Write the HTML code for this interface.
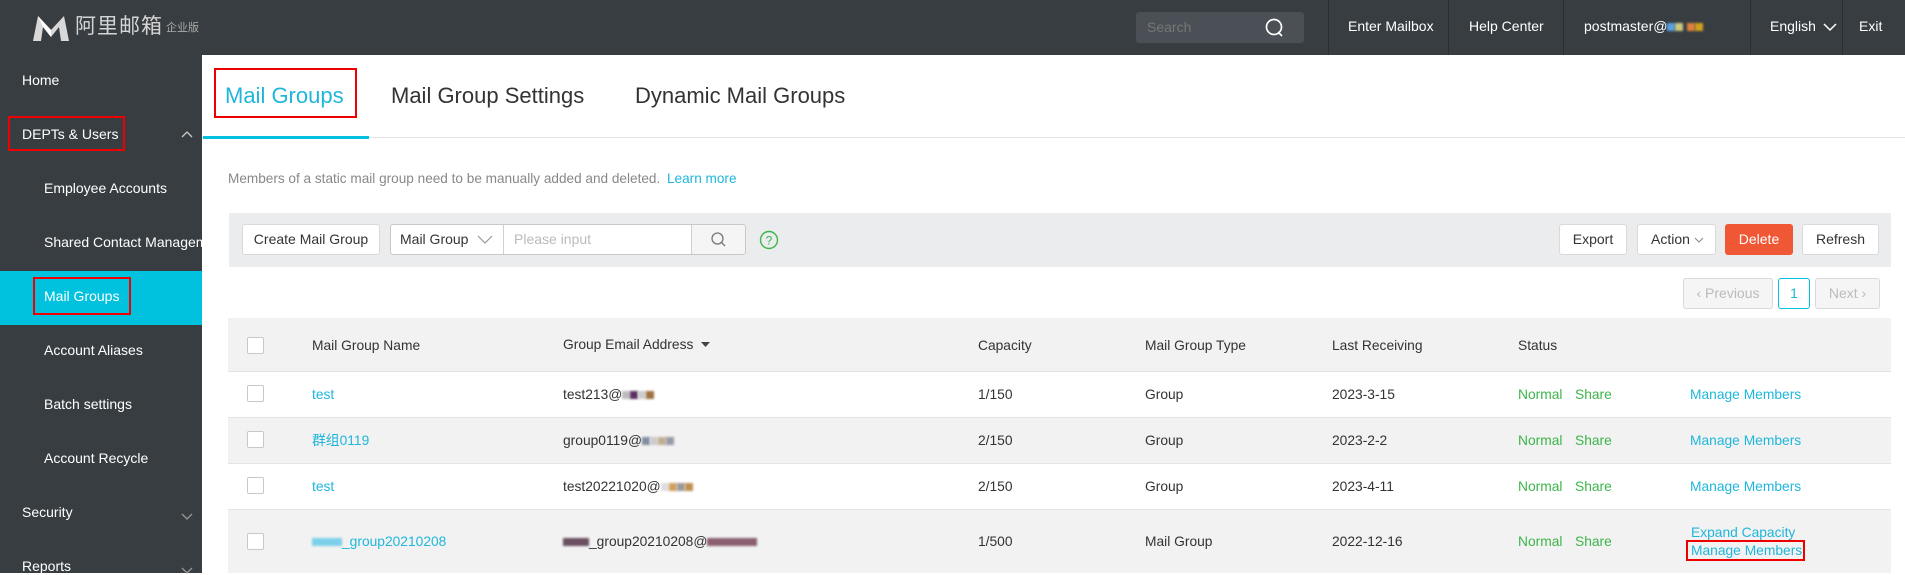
<!DOCTYPE html>
<html><head><meta charset="utf-8"><style>
*{margin:0;padding:0;box-sizing:border-box}
body{width:1905px;height:573px;overflow:hidden;background:#fff;font-family:"Liberation Sans","Noto Sans CJK SC",sans-serif;color:#333;position:relative}
.a{position:absolute;white-space:nowrap}
.hdr{left:0;top:0;width:1905px;height:55px;background:#373d41}
.side{left:0;top:55px;width:202px;height:518px;background:#373d41}
.nav{color:#fff;font-size:14px;line-height:17px}
.sep{top:0;width:1px;height:55px;background:#2a2f32}
.ht{color:#fff;font-size:14px;top:18px;line-height:17px}
.btn{background:#fff;border:1px solid #d9d9d9;border-radius:3px;height:31px;top:224px;font-size:14px;line-height:29px;text-align:center;color:#333}
.row{left:228px;width:1663px;border-bottom:1px solid #e3e3e3}
.cb{width:17px;height:17px;border:1px solid #c8c8c8;border-radius:2px;background:#fff;left:247px}
.t{font-size:13.8px;line-height:17px}
.lk{color:#1fb6db}
.gr{color:#3cb54a}
.blur{display:inline-block;width:8px;height:8px;vertical-align:middle;filter:blur(1px)}
</style></head><body>
<div class="a hdr"></div>
<svg class="a" style="left:31px;top:15px" width="40" height="27" viewBox="0 0 40 27"><path d="M2 26 L7 1 L20 15 L33 1 L38 26 L30 26 L28 12 L20 22 L12 12 L10 26Z" fill="#d9d9d9"/><path d="M7 1 L20 15 L20 22 L12 12Z" fill="#fff"/></svg>
<div class="a" style="left:75px;top:14px;color:#d5d5d5;font-size:21px;line-height:26px;letter-spacing:1px">阿里邮箱</div>
<div class="a" style="left:166px;top:21px;color:#aaa;font-size:11px;line-height:14px">企业版</div>
<div class="a" style="left:1136px;top:12px;width:168px;height:31px;background:#4a5055;border-radius:3px"></div>
<div class="a" style="left:1147px;top:19px;color:#777;font-size:14px;line-height:17px">Search</div>
<svg class="a" style="left:1264px;top:17px" width="22" height="22" viewBox="0 0 22 22"><circle cx="10" cy="10" r="7.5" fill="none" stroke="#fff" stroke-width="1.7"/><path d="M14 15 L18 19" stroke="#fff" stroke-width="1.7"/></svg>
<div class="a sep" style="left:1328px"></div>
<div class="a ht" style="left:1348px">Enter Mailbox</div>
<div class="a sep" style="left:1448px"></div>
<div class="a ht" style="left:1469px">Help Center</div>
<div class="a sep" style="left:1563px"></div>
<div class="a ht" style="left:1584px">postmaster@<span class="blur" style="background:#5aa0e0"></span><span class="blur" style="background:#c9c980"></span> <span class="blur" style="background:#e08040"></span><span class="blur" style="background:#d0a020"></span></div>
<div class="a sep" style="left:1750px"></div>
<div class="a ht" style="left:1770px">English</div>
<svg class="a" style="left:1823px;top:22px" width="14" height="10"><path d="M1 2 L7 8 L13 2" stroke="#fff" stroke-width="1.5" fill="none"/></svg>
<div class="a sep" style="left:1842px"></div>
<div class="a ht" style="left:1859px">Exit</div>

<div class="a side"></div>
<div class="a" style="left:0;top:271px;width:202px;height:54px;background:#00c1de"></div>
<div class="a nav" style="left:22px;top:72px">Home</div>
<div class="a nav" style="left:22px;top:126px">DEPTs &amp; Users</div>
<div class="a" style="left:8px;top:116px;width:117px;height:35px;border:2px solid #e00"></div>
<svg class="a" style="left:181px;top:131px" width="12" height="8"><path d="M1 6 L6 1 L11 6" stroke="#ccc" stroke-width="1.3" fill="none"/></svg>
<div class="a nav" style="left:44px;top:180px">Employee Accounts</div>
<div class="a nav" style="left:44px;top:234px;width:158px;overflow:hidden">Shared Contact Management</div>
<div class="a nav" style="left:44px;top:288px">Mail Groups</div>
<div class="a" style="left:33px;top:277px;width:98px;height:38px;border:2px solid #e00"></div>
<div class="a nav" style="left:44px;top:342px">Account Aliases</div>
<div class="a nav" style="left:44px;top:396px">Batch settings</div>
<div class="a nav" style="left:44px;top:450px">Account Recycle</div>
<div class="a nav" style="left:22px;top:504px">Security</div>
<svg class="a" style="left:181px;top:512px" width="12" height="8"><path d="M1 2 L6 7 L11 2" stroke="#999" stroke-width="1.3" fill="none"/></svg>
<div class="a nav" style="left:22px;top:558px">Reports</div>
<svg class="a" style="left:181px;top:566px" width="12" height="8"><path d="M1 2 L6 7 L11 2" stroke="#999" stroke-width="1.3" fill="none"/></svg>

<div class="a" style="left:202px;top:137px;width:1703px;height:1px;background:#e5e5e5"></div>
<div class="a" style="left:203px;top:136px;width:166px;height:3px;background:#00c1de"></div>
<div class="a" style="left:225px;top:83px;font-size:22px;line-height:26px;color:#1fb6db">Mail Groups</div>
<div class="a" style="left:214px;top:68px;width:143px;height:50px;border:2px solid #e00"></div>
<div class="a" style="left:391px;top:83px;font-size:22px;line-height:26px;color:#333">Mail Group Settings</div>
<div class="a" style="left:635px;top:83px;font-size:22px;line-height:26px;color:#333">Dynamic Mail Groups</div>

<div class="a" style="left:228px;top:170px;font-size:13.6px;line-height:17px;color:#888">Members of a static mail group need to be manually added and deleted.</div>
<div class="a" style="left:667px;top:170px;font-size:13.6px;line-height:17px;color:#1fb6db">Learn more</div>

<div class="a" style="left:229px;top:213px;width:1662px;height:54px;background:#ebeced"></div>
<div class="a btn" style="left:242px;width:138px">Create Mail Group</div>
<div class="a btn" style="left:390px;width:356px;border-color:#c8c8c8"></div>
<div class="a" style="left:400px;top:231px;font-size:14px;line-height:17px">Mail Group</div>
<svg class="a" style="left:477px;top:235px" width="16" height="10"><path d="M1 1 L8 8 L15 1" stroke="#999" stroke-width="1.2" fill="none"/></svg>
<div class="a" style="left:503px;top:225px;width:1px;height:29px;background:#d0d0d0"></div>
<div class="a" style="left:514px;top:231px;font-size:14px;line-height:17px;color:#bbb">Please input</div>
<div class="a" style="left:691px;top:225px;width:54px;height:29px;background:#f5f5f5;border-left:1px solid #d0d0d0;border-radius:0 3px 3px 0"></div>
<svg class="a" style="left:710px;top:231px" width="17" height="17"><circle cx="7.5" cy="7.5" r="5.5" fill="none" stroke="#777" stroke-width="1.3"/><path d="M11.5 11.5 L15 15" stroke="#777" stroke-width="1.3"/></svg>
<svg class="a" style="left:759px;top:230px" width="20" height="20"><circle cx="10" cy="10" r="8.5" fill="none" stroke="#3cb54a" stroke-width="1.4"/><text x="10" y="14.5" font-size="12" text-anchor="middle" fill="#3cb54a" font-family="Liberation Sans">?</text></svg>
<div class="a btn" style="left:1559px;width:68px">Export</div>
<div class="a btn" style="left:1637px;width:79px;text-align:left;padding-left:13px">Action</div>
<svg class="a" style="left:1694px;top:237px" width="10" height="6"><path d="M1 1 L5 5 L9 1" stroke="#888" stroke-width="1" fill="none"/></svg>
<div class="a btn" style="left:1725px;width:68px;background:#f05734;border-color:#f05734;color:#fff">Delete</div>
<div class="a btn" style="left:1802px;width:77px">Refresh</div>

<div class="a btn" style="left:1683px;top:278px;width:90px;background:#f5f5f5;color:#bbb">‹ Previous</div>
<div class="a btn" style="left:1778px;top:278px;width:32px;border-color:#00c1de;color:#1fb6db">1</div>
<div class="a btn" style="left:1815px;top:278px;width:65px;background:#f5f5f5;color:#bbb">Next ›</div>

<div class="a row" style="top:318px;height:54px;background:#f2f2f2"></div>
<div class="a row" style="top:372px;height:46px;background:#fff"></div>
<div class="a row" style="top:418px;height:46px;background:#f2f2f2"></div>
<div class="a row" style="top:464px;height:46px;background:#fff"></div>
<div class="a row" style="top:510px;height:63px;background:#f2f2f2;border:0"></div>

<div class="a cb" style="top:337px"></div>
<div class="a t" style="left:312px;top:337px">Mail Group Name</div>
<div class="a t" style="left:563px;top:336px">Group Email Address</div>
<svg class="a" style="left:701px;top:342px" width="9" height="6"><path d="M0 0 L9 0 L4.5 5Z" fill="#444"/></svg>
<div class="a t" style="left:978px;top:337px">Capacity</div>
<div class="a t" style="left:1145px;top:337px">Mail Group Type</div>
<div class="a t" style="left:1332px;top:337px">Last Receiving</div>
<div class="a t" style="left:1518px;top:337px">Status</div>

<div class="a cb" style="top:385px"></div>
<div class="a t lk" style="left:312px;top:386px">test</div>
<div class="a t" style="left:563px;top:386px">test213@<span class="blur" style="background:#bbb"></span><span class="blur" style="background:#5a3060"></span><span class="blur" style="background:#ccc"></span><span class="blur" style="background:#a07040"></span></div>
<div class="a t" style="left:978px;top:386px">1/150</div>
<div class="a t" style="left:1145px;top:386px">Group</div>
<div class="a t" style="left:1332px;top:386px">2023-3-15</div>
<div class="a t gr" style="left:1518px;top:386px">Normal</div>
<div class="a t gr" style="left:1575px;top:386px">Share</div>
<div class="a t lk" style="left:1690px;top:386px">Manage Members</div>

<div class="a cb" style="top:431px"></div>
<div class="a t lk" style="left:312px;top:432px">群组0119</div>
<div class="a t" style="left:563px;top:432px">group0119@<span class="blur" style="background:#8090a0"></span><span class="blur" style="background:#ccc"></span><span class="blur" style="background:#c0b090"></span><span class="blur" style="background:#99a"></span></div>
<div class="a t" style="left:978px;top:432px">2/150</div>
<div class="a t" style="left:1145px;top:432px">Group</div>
<div class="a t" style="left:1332px;top:432px">2023-2-2</div>
<div class="a t gr" style="left:1518px;top:432px">Normal</div>
<div class="a t gr" style="left:1575px;top:432px">Share</div>
<div class="a t lk" style="left:1690px;top:432px">Manage Members</div>

<div class="a cb" style="top:477px"></div>
<div class="a t lk" style="left:312px;top:478px">test</div>
<div class="a t" style="left:563px;top:478px">test20221020@<span class="blur" style="background:#ddd"></span><span class="blur" style="background:#d0a060"></span><span class="blur" style="background:#999"></span><span class="blur" style="background:#c09050"></span></div>
<div class="a t" style="left:978px;top:478px">2/150</div>
<div class="a t" style="left:1145px;top:478px">Group</div>
<div class="a t" style="left:1332px;top:478px">2023-4-11</div>
<div class="a t gr" style="left:1518px;top:478px">Normal</div>
<div class="a t gr" style="left:1575px;top:478px">Share</div>
<div class="a t lk" style="left:1690px;top:478px">Manage Members</div>

<div class="a cb" style="top:533px"></div>
<div class="a t lk" style="left:312px;top:533px"><span class="blur" style="background:#7cd0ea;width:30px"></span>_group20210208</div>
<div class="a t" style="left:563px;top:533px"><span class="blur" style="background:#6a5060;width:26px"></span>_group20210208@<span class="blur" style="background:#8a6070;width:50px"></span></div>
<div class="a t" style="left:978px;top:533px">1/500</div>
<div class="a t" style="left:1145px;top:533px">Mail Group</div>
<div class="a t" style="left:1332px;top:533px">2022-12-16</div>
<div class="a t gr" style="left:1518px;top:533px">Normal</div>
<div class="a t gr" style="left:1575px;top:533px">Share</div>
<div class="a t lk" style="left:1691px;top:524px">Expand Capacity</div>
<div class="a t lk" style="left:1691px;top:542px">Manage Members</div>
<div class="a" style="left:1686px;top:540px;width:119px;height:21px;border:2px solid #e00"></div>
</body></html>
